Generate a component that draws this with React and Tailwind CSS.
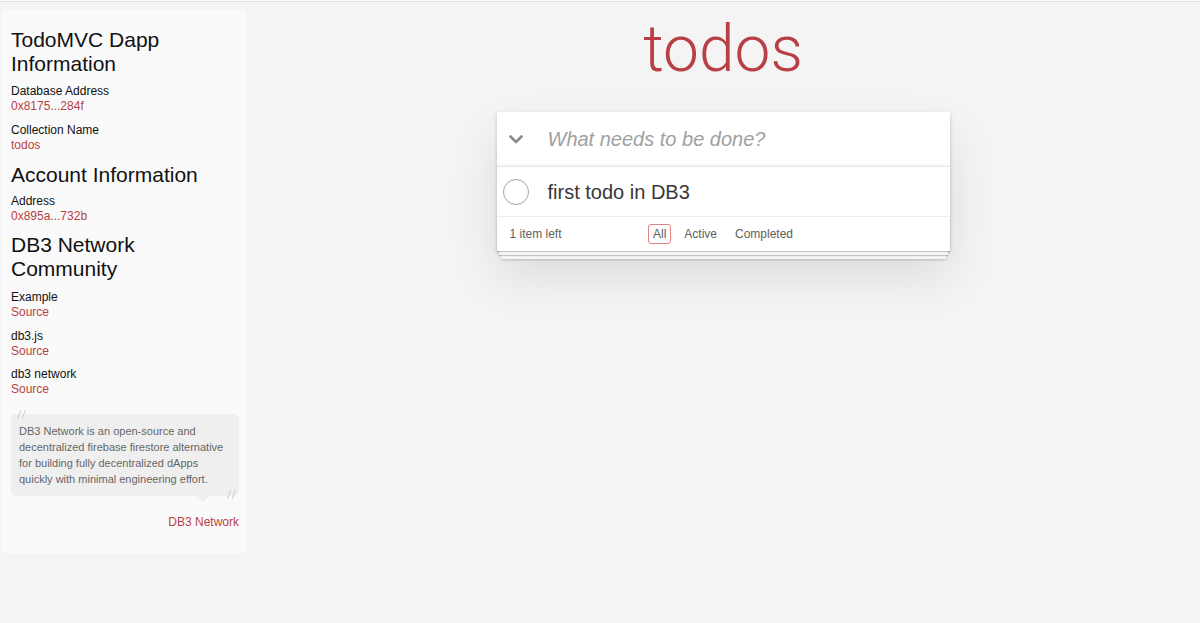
import React from 'react';

const sans = { fontFamily: '"Liberation Sans", Arial, sans-serif' };

function InfoItem({ label, value, className = '' }) {
    return (
        <div className={`text-[12px] leading-[15px] ${className}`}>
            <div className="text-[#111]">{label}</div>
            <div className="text-[#b83f45]">{value}</div>
        </div>
    );
}

// decorative quote marks of the bubble
function QuoteMark({ className }) {
    return (
        <svg className={className} width="9" height="9" viewBox="0 0 9 9" fill="none" stroke="#cdcdcd" strokeWidth="1" strokeLinecap="round">
            <line x1="3.5" y1="0.5" x2="1" y2="8.5" />
            <line x1="8" y1="0.5" x2="5.5" y2="8.5" />
        </svg>
    );
}

function Sidebar() {
    return (
        <aside className="w-[244px] ml-[2px] mt-[7px] self-start rounded-[5px] bg-[#fafafa] pl-[9px] pr-[7px] pt-[19px] pb-[23px]">
            <h3 className="text-[21px] leading-[24px] text-[#111]">TodoMVC Dapp Information</h3>
            <InfoItem className="mt-[8px]" label="Database Address" value="0x8175...284f" />
            <InfoItem className="mt-[9px]" label="Collection Name" value="todos" />

            <h3 className="mt-[10px] text-[21px] leading-[24px] text-[#111]">Account Information</h3>
            <InfoItem className="mt-[7px]" label="Address" value="0x895a...732b" />

            <h3 className="mt-[9px] text-[21px] leading-[24px] text-[#111]">DB3 Network Community</h3>
            <InfoItem className="mt-[9px]" label="Example" value="Source" />
            <InfoItem className="mt-[9px]" label="db3.js" value="Source" />
            <InfoItem className="mt-[8px]" label="db3 network" value="Source" />

            {/* quote bubble */}
            <div className="relative mt-[17px] rounded-[5px] bg-[#efefef] px-[8px] py-[9px] text-[11px] leading-[16px] text-[#666]">
                <QuoteMark className="absolute left-[6px] -top-[4px]" />
                DB3 Network is an open-source and decentralized firebase firestore alternative for building fully decentralized dApps quickly with minimal engineering effort.
                <QuoteMark className="absolute right-[3px] -bottom-[3px]" />
                <span className="absolute right-[30px] -bottom-[6px] h-0 w-0 border-x-[6px] border-t-[6px] border-x-transparent border-t-[#efefef]" />
            </div>
            <div className="mt-[19px] text-right text-[12px] leading-[15px] text-[#b83f45]">DB3 Network</div>
        </aside>
    );
}

function TodoApp() {
    return (
        <section className="relative mt-[30px] w-[453px] bg-white shadow-[0_2px_4px_rgba(0,0,0,0.2),0_25px_50px_rgba(0,0,0,0.1)]">
            <div className="flex h-[55px] items-center border-b border-[#e6e6e6] shadow-[inset_0_-2px_1px_rgba(0,0,0,0.03)]">
                <div className="flex w-[51px] justify-start pl-[12px]">
                    <svg width="14" height="9" viewBox="0 0 14 9" fill="none" stroke="#8a8a8a" strokeWidth="2.6" strokeLinecap="round" strokeLinejoin="round">
                        <polyline points="1.5,1.5 7,7 12.5,1.5" />
                    </svg>
                </div>
                <span className="text-[20px] italic text-[#a0a0a0]">What needs to be done?</span>
            </div>
            <div className="flex h-[50px] items-center border-b border-[#ededed]">
                <div className="flex w-[51px] justify-start pl-[6px]">
                    <span className="block h-[26px] w-[26px] rounded-full border border-[#a5a5a5]" />
                </div>
                <span className="text-[20px] text-[#383838]">first todo in DB3</span>
            </div>
            <footer className="relative grid h-[34px] grid-cols-[1fr_auto_1fr] items-center px-[13px] text-[12px] text-[#5e5e5e] shadow-[0_1px_1px_rgba(0,0,0,0.2),0_6px_0_-2px_#f6f6f6,0_7px_1px_-2px_rgba(0,0,0,0.2),0_12px_0_-4px_#f6f6f6,0_13px_2px_-4px_rgba(0,0,0,0.2)]">
                <span>1 item left</span>
                <ul className="flex items-center">
                    <li className="mx-[4px] rounded-[3px] border border-[#de8484] px-[4px] leading-[18px]">All</li>
                    <li className="mx-[4px] rounded-[3px] border border-transparent px-[4px] leading-[18px]">Active</li>
                    <li className="mx-[4px] rounded-[3px] border border-transparent px-[4px] leading-[18px]">Completed</li>
                </ul>
                <span />
            </footer>
        </section>
    );
}

export default function App() {
    return (
        <div className="min-h-screen bg-[#f4f4f4]" style={sans}>
            <div className="h-[2px] bg-[#fafafa] border-b border-[#e2e2e2]" />
            <div className="flex">
                <Sidebar />
                <main className="flex flex-1 flex-col items-center pt-[16px]">
                    <h1 className="h-[64px] text-[64px] leading-[64px] font-light text-[#b83f45]" style={{ fontFamily: 'Roboto, sans-serif' }}>
                        todos
                    </h1>
                    <TodoApp />
                </main>
            </div>
        </div>
    );
}
